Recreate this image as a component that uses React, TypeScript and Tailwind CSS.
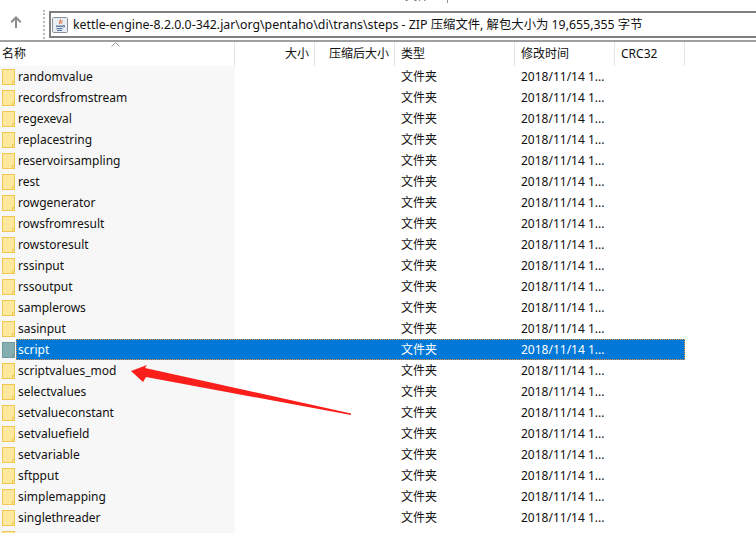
const names = [
  "randomvalue",
  "recordsfromstream",
  "regexeval",
  "replacestring",
  "reservoirsampling",
  "rest",
  "rowgenerator",
  "rowsfromresult",
  "rowstoresult",
  "rssinput",
  "rssoutput",
  "samplerows",
  "sasinput",
  "script",
  "scriptvalues_mod",
  "selectvalues",
  "setvalueconstant",
  "setvaluefield",
  "setvariable",
  "sftpput",
  "simplemapping",
  "singlethreader",
];

function FolderIcon({ selected }: { selected?: boolean }) {
  const fill = selected ? "#84aeb0" : "#fee89e";
  const stroke = selected ? "#6f9a9e" : "#f0c850";
  return (
    <svg width="13" height="16" viewBox="0 0 13 16" className="shrink-0">
      <rect x="0.5" y="0.5" width="12" height="15" fill={fill} stroke={stroke} />
      <path d="M10.5 15.5V12.5H12.5" fill="none" stroke={stroke} />
    </svg>
  );
}

function JarIcon() {
  return (
    <svg width="16" height="16" viewBox="0 0 16 16" className="shrink-0">
      <rect x="0.5" y="0.5" width="15" height="15" rx="1" fill="#e8eef4" stroke="#8a9099" />
      <path d="M8 2.5c1.5 1.5-1.5 2.5 0 4.5" fill="none" stroke="#d9622b" strokeWidth="1.2" />
      <path d="M10 3.5c1 1-1 2-0.5 3" fill="none" stroke="#d9622b" />
      <path d="M4 8.5h7v1.5H4ZM4.5 11h6v1.2h-6ZM5 13h5v1H5Z" fill="#5c7ea6" />
      <path d="M11 8.5h1.5v1.5H11" fill="none" stroke="#5c7ea6" />
    </svg>
  );
}

export default function App() {
  return (
    <div className="relative h-[533px] w-[756px] overflow-hidden bg-white text-[12px] text-[#111] [font-family:'Noto_Sans','Noto_Sans_CJK_SC',sans-serif]">
      {/* clipped bits of the window above */}
      <span className="absolute left-[405px] top-[-13px] text-[#555]">文件</span>
      <div className="absolute left-[447px] top-0 h-[3px] w-px bg-[#999]" />

      {/* toolbar */}
      <div className="flex h-[42px] items-start border-b-2 border-[#a0a0a0] pt-[11px]">
        <div className="flex h-[22px] w-[32px] items-center justify-center">
          <svg width="12" height="12" viewBox="0 0 12 12">
            <path d="M6 12V1.5M1.2 6.3L6 1.5l4.8 4.8" fill="none" stroke="#8c8c8c" strokeWidth="2" />
          </svg>
        </div>
        <div className="-mt-px ml-[11px] h-[29px] w-[2px] border-l-2 border-dotted border-[#bbb]" />
        <div className="ml-[4px] flex h-[27px] flex-1 items-center gap-[5px] border-y-2 border-l-2 border-[#808080] pl-px text-[12.35px]">
          <JarIcon />
          <span className="translate-y-px whitespace-pre">{"kettle-engine-8.2.0.0-342.jar\\org\\pentaho\\di\\trans\\steps - ZIP 压缩文件, 解包大小为 19,655,355 字节"}</span>
        </div>
      </div>

      {/* column headers */}
      <div className="flex h-[24px]">
        <div className="relative flex w-[235px] items-center border-r border-[#e5e5e5] pl-[2px]">
          名称
          <svg width="9" height="5" viewBox="0 0 9 5" className="absolute left-[111px] top-0">
            <path d="M0.5 4.5L4.5 0.5L8.5 4.5" fill="none" stroke="#9a9a9a" />
          </svg>
        </div>
        <div className="flex w-[80px] items-center justify-end border-r border-[#e5e5e5] pr-[5px]">大小</div>
        <div className="flex w-[80px] items-center border-r border-[#e5e5e5] pl-[14px]">压缩后大小</div>
        <div className="flex w-[120px] items-center border-r border-[#e5e5e5] pl-[6px]">类型</div>
        <div className="flex w-[100px] items-center border-r border-[#e5e5e5] pl-[6px]">修改时间</div>
        <div className="flex w-[70px] items-center border-r border-[#e5e5e5] pl-[6px]">CRC32</div>
      </div>

      {/* rows */}
      <div className="flex flex-col">
        {names.map((name) => {
          const selected = name === "script";
          return (
            <div key={name} className="flex h-[21px] w-[685px] items-center">
              <div className="flex h-full w-[16px] items-center bg-[#f7f7f7] pl-[2px]">
                <FolderIcon selected={selected} />
              </div>
              <div
                className={
                  selected
                    ? "flex h-full w-[669px] items-center border border-dotted border-[#e8903a] bg-[#0078d7] text-white"
                    : "flex h-full w-[669px] items-center"
                }
              >
                <div className={selected ? "flex h-full w-[218px] items-center pl-px" : "flex h-full w-[219px] items-center bg-[#f7f7f7] pl-[2px]"}>
                  {name}
                </div>
                <div className="w-[166px]" />
                <div className="w-[120px]">文件夹</div>
                <div>2018/11/14 1...</div>
              </div>
            </div>
          );
        })}
        <div className="flex h-[21px] w-[235px] items-center bg-[#f7f7f7] pl-[2px]">
          <FolderIcon />
        </div>
      </div>

      {/* annotation arrow */}
      <svg width="756" height="533" viewBox="0 0 756 533" className="pointer-events-none absolute left-0 top-0">
        <path d="M131 371L147 365L145 368L351 413.5L351 415L146 377L143 382Z" fill="#fb1f1c" />
      </svg>
    </div>
  );
}
